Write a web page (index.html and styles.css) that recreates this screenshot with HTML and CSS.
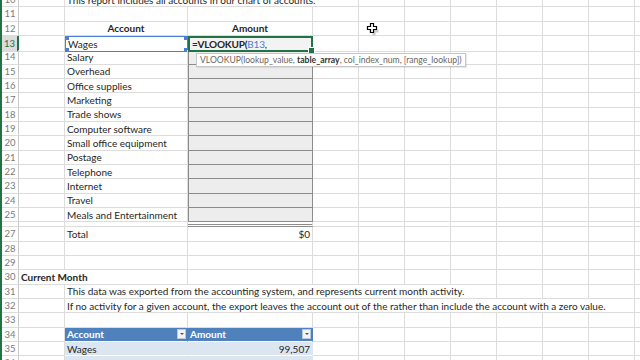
FILE: index.html
```html
<!DOCTYPE html>
<html lang="en">

<head>
    <meta charset="UTF-8">
    <title>Report - VLOOKUP</title>
    <link rel="stylesheet" href="styles.css">
</head>

<body>
    <div class="sheet">
        <div class="row"><div class="hd">10</div><div></div><div><span class="spill">This report includes all accounts in our chart of accounts.</span></div><div></div><div class="rest"></div></div>
        <div class="row"><div class="hd">11</div><div></div><div></div><div></div><div class="rest"></div></div>
        <div class="row"><div class="hd">12</div><div></div><div class="th-plain">Account</div><div class="th-plain">Amount</div><div class="rest"></div></div>
        <div class="row"><div class="hd sel">13</div><div></div><div class="ref">Wages</div><div class="active"><span><b>=VLOOKUP(</b><span class="ref-txt">B13</span>,</span></div><div class="rest"></div></div>
        <div class="row"><div class="hd">14</div><div></div><div>Salary</div><div class="inp"></div><div class="rest"></div></div>
        <div class="row"><div class="hd">15</div><div></div><div>Overhead</div><div class="inp"></div><div class="rest"></div></div>
        <div class="row"><div class="hd">16</div><div></div><div>Office supplies</div><div class="inp"></div><div class="rest"></div></div>
        <div class="row"><div class="hd">17</div><div></div><div>Marketing</div><div class="inp"></div><div class="rest"></div></div>
        <div class="row"><div class="hd">18</div><div></div><div>Trade shows</div><div class="inp"></div><div class="rest"></div></div>
        <div class="row"><div class="hd">19</div><div></div><div>Computer software</div><div class="inp"></div><div class="rest"></div></div>
        <div class="row"><div class="hd">20</div><div></div><div>Small office equipment</div><div class="inp"></div><div class="rest"></div></div>
        <div class="row"><div class="hd">21</div><div></div><div>Postage</div><div class="inp"></div><div class="rest"></div></div>
        <div class="row"><div class="hd">22</div><div></div><div>Telephone</div><div class="inp"></div><div class="rest"></div></div>
        <div class="row"><div class="hd">23</div><div></div><div>Internet</div><div class="inp"></div><div class="rest"></div></div>
        <div class="row"><div class="hd">24</div><div></div><div>Travel</div><div class="inp"></div><div class="rest"></div></div>
        <div class="row"><div class="hd">25</div><div></div><div>Meals and Entertainment</div><div class="inp"></div><div class="rest"></div></div>
        <div class="row thin"><div class="hd"></div><div></div><div></div><div class="dbl"></div><div class="rest"></div></div>
        <div class="row"><div class="hd">27</div><div></div><div>Total</div><div class="num">$0</div><div class="rest"></div></div>
        <div class="row"><div class="hd">28</div><div></div><div></div><div></div><div class="rest"></div></div>
        <div class="row"><div class="hd">29</div><div></div><div></div><div></div><div class="rest"></div></div>
        <div class="row"><div class="hd">30</div><div><span class="spill bold">Current Month</span></div><div></div><div></div><div class="rest"></div></div>
        <div class="row"><div class="hd">31</div><div></div><div><span class="spill">This data was exported from the accounting system, and represents current month activity.</span></div><div></div><div class="rest"></div></div>
        <div class="row"><div class="hd">32</div><div></div><div><span class="spill">If no activity for a given account, the export leaves the account out of the rather than include the account with a zero value.</span></div><div></div><div class="rest"></div></div>
        <div class="row"><div class="hd">33</div><div></div><div></div><div></div><div class="rest"></div></div>
        <div class="row"><div class="hd">34</div><div></div><div class="tbl-head">Account<span class="dd"></span></div><div class="tbl-head">Amount<span class="dd"></span></div><div class="rest"></div></div>
        <div class="row"><div class="hd">35</div><div></div><div class="tbl-row">Wages</div><div class="tbl-row num">99,507</div><div class="rest"></div></div>
        <div class="row"><div class="hd">36</div><div></div><div class="tbl-row"></div><div class="tbl-row"></div><div class="rest"></div></div>

        <div class="tip">VLOOKUP(lookup_value, <b>table_array</b>, col_index_num, [range_lookup])</div>

        <svg class="cursor" width="14" height="13" viewBox="0 0 14 13">
            <path d="M5 2h3v3h3v3h-3v3h-3v-3h-3v-3h3z" fill="#999" opacity="0.5" transform="translate(1.5 1.5)"/>
            <path d="M4.5 0.5h3v3h3v3h-3v3h-3v-3h-3v-3h3z" fill="#fff" stroke="#000" stroke-width="1.2"/>
        </svg>
    </div>
</body>

</html>
```

FILE: styles.css
```css
* {
    margin: 0;
    padding: 0;
    box-sizing: border-box;
}

body {
    width: 640px;
    height: 360px;
    overflow: hidden;
    background: #fff;
    font-family: Lato, 'Liberation Sans', sans-serif;
    font-size: 10px;
    color: #262626;
}

.sheet {
    position: relative;
    margin-top: -7px;
    border-left: 2px solid #217346;
}

.row {
    display: grid;
    grid-template-columns: 17px 46px 123px 125px 1fr;
    height: 14.33px;
}

.row.thin {
    height: 5px;
    overflow: hidden;
}

.row > div {
    display: flex;
    align-items: center;
    min-width: 0;
    padding: 0 2px;
    white-space: nowrap;
    border-right: 1px solid #dcdcdc;
    border-bottom: 1px solid #dcdcdc;
}

.row .hd {
    justify-content: center;
    padding: 0;
    color: #7a7a7a;
    font-size: 9.5px;
    border-right-color: #c9c9c9;
}

.row .hd.sel {
    background: #dcdcdc;
    color: #217346;
    border-right: 2px solid #217346;
}

.row .rest {
    border-right: 0;
    background: repeating-linear-gradient(to right, transparent 0 45px, #dcdcdc 45px 46px);
}

.spill {
    z-index: 1;
    align-self: stretch;
    display: flex;
    align-items: center;
    background: #fff;
}

.bold,
.th-plain {
    font-weight: bold;
}

.th-plain {
    justify-content: center;
}

.num {
    justify-content: flex-end;
}

/* range reference highlight for B13 */
.row .ref {
    border: 1px solid #4a7fd4;
    background:
        linear-gradient(#4a7fd4, #4a7fd4) left top / 3px 3px no-repeat,
        linear-gradient(#4a7fd4, #4a7fd4) right top / 3px 3px no-repeat,
        linear-gradient(#4a7fd4, #4a7fd4) left bottom / 3px 3px no-repeat,
        linear-gradient(#4a7fd4, #4a7fd4) right bottom / 3px 3px no-repeat;
}

.row .active {
    position: relative;
    background: #f3f3f3;
    border: 2px solid #217346;
    letter-spacing: -0.2px;
}

.active::after {
    content: '';
    position: absolute;
    right: -4px;
    bottom: -4px;
    width: 5px;
    height: 5px;
    background: #217346;
    border: 1px solid #fff;
}

.ref-txt {
    color: #4a7fd4;
}

.row .inp {
    background: #ededed;
    border-left: 1px solid #8c8c8c;
    border-right: 1px solid #8c8c8c;
    border-bottom: 1px solid #8c8c8c;
}

.row .dbl {
    border-bottom: 3px double #8c8c8c;
}

.row .tbl-head {
    background: #4f81bd;
    color: #fff;
    font-weight: bold;
    border-right-color: #4f81bd;
    border-bottom-color: #fff;
    padding-right: 1px;
}

.dd {
    margin-left: auto;
    width: 9px;
    height: 10px;
    background: #f4f4f4;
    border: 1px solid #b8c8dc;
    position: relative;
}

.dd::after {
    content: '';
    position: absolute;
    left: 2px;
    top: 3px;
    border-left: 2px solid transparent;
    border-right: 2px solid transparent;
    border-top: 2px solid #555;
}

.row .tbl-row {
    background: #dce6f1;
    border-right-color: #dce6f1;
    border-bottom-color: #fff;
}

.tip {
    position: absolute;
    left: 194px;
    top: 60px;
    height: 14px;
    padding: 0 3px;
    line-height: 12px;
    font-size: 8.6px;
    color: #666;
    background: #fff;
    border: 1px solid #c6c6c6;
    box-shadow: 1px 1px 1px rgba(0, 0, 0, 0.08);
    white-space: nowrap;
    z-index: 2;
}

.tip b {
    color: #333;
}

.cursor {
    position: absolute;
    left: 364px;
    top: 30px;
    z-index: 3;
}
```
